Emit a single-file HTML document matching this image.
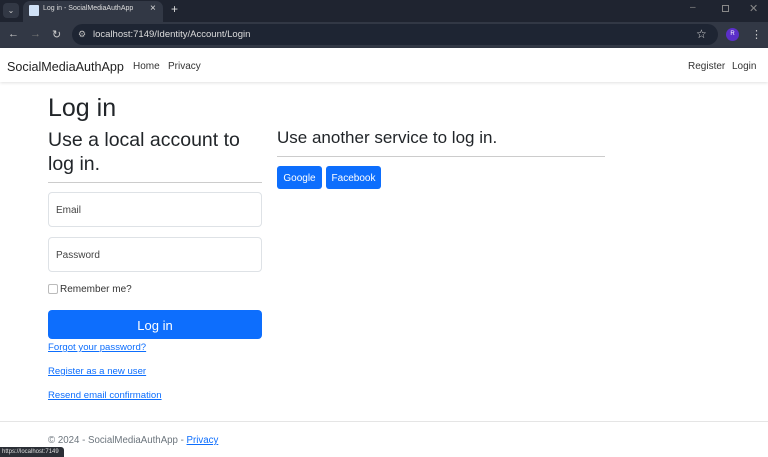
<!DOCTYPE html>
<html><head><meta charset="utf-8"><style>
*{box-sizing:border-box;margin:0;padding:0}
body{width:768px;height:457px;overflow:hidden;background:#fff;font-family:"Liberation Sans",sans-serif;position:relative;color:#212529}
.abs{position:absolute;white-space:nowrap}
.tabbar{position:absolute;left:0;top:0;width:768px;height:22px;background:#1f2430}
.tab{position:absolute;left:23px;top:1px;width:140px;height:21px;background:#323845;border-radius:7px 7px 0 0}
.toolbar{position:absolute;left:0;top:22px;width:768px;height:26px;background:#323845}
.url{position:absolute;left:72px;top:24px;width:646px;height:21px;background:#1e2533;border-radius:11px}
.nav{position:absolute;left:0;top:48px;width:768px;height:34px;background:#fff;box-shadow:0 1px 3px rgba(0,0,0,.12)}
a{color:#0d6efd;text-decoration:underline}
.inp{position:absolute;left:48px;width:214px;height:35px;border:1px solid #dee2e6;border-radius:4px;font-size:10px;padding:0 7px;line-height:35px;color:#444}
.btn{position:absolute;background:#0d6efd;color:#fff;border-radius:3px;text-align:center}
</style></head><body>
<div class="tabbar"></div>
<div class="abs" style="left:3px;top:3px;width:16px;height:15px;background:#323845;border-radius:4px;color:#ccc;font-size:8px;text-align:center;line-height:15px">⌄</div>
<div class="tab"></div>
<div class="abs" style="left:29px;top:5px;width:10px;height:11px;background:#cfe0f5;border-radius:1px"></div>
<div class="abs" style="left:43px;top:5px;font-size:7px;color:#ddd">Log in - SocialMediaAuthApp</div>
<div class="abs" style="left:150px;top:3px;font-size:10px;color:#ddd">×</div>
<div class="abs" style="left:171px;top:2px;font-size:12px;color:#ddd">+</div>
<div class="abs" style="left:690px;top:2px;font-size:10px;color:#888">–</div>
<div class="abs" style="left:722px;top:5px;width:7px;height:7px;border:1px solid #888"></div>
<div class="abs" style="left:749px;top:2px;font-size:11px;color:#888">✕</div>
<div class="toolbar"></div>
<div class="abs" style="left:8px;top:28px;font-size:11px;color:#ccc">←</div>
<div class="abs" style="left:30px;top:28px;font-size:11px;color:#777">→</div>
<div class="abs" style="left:52px;top:28px;font-size:11px;color:#ccc">↻</div>
<div class="url"></div>
<div class="abs" style="left:78px;top:29px;font-size:9px;color:#bbb">⚙</div>
<div class="abs" style="left:93px;top:29px;font-size:9.5px;color:#ddd">localhost:7149/Identity/Account/Login</div>
<div class="abs" style="left:696px;top:27px;font-size:12px;color:#ddd">☆</div>
<div class="abs" style="left:726px;top:28px;width:13px;height:13px;border-radius:50%;background:#5b2fc9;color:#fff;font-size:6px;text-align:center;line-height:13px">R</div>
<div class="abs" style="left:751px;top:28px;font-size:11px;color:#ccc">⋮</div>
<div class="nav"></div>
<div class="abs" style="left:7px;top:60px;font-size:12.6px;color:#222">SocialMediaAuthApp</div>
<div class="abs" style="left:133px;top:61px;font-size:10px;color:#333">Home</div>
<div class="abs" style="left:168px;top:61px;font-size:10px;color:#333">Privacy</div>
<div class="abs" style="left:688px;top:61px;font-size:10px;color:#333">Register</div>
<div class="abs" style="left:732px;top:61px;font-size:10px;color:#333">Login</div>
<div class="abs" style="left:48px;top:94px;font-size:25px">Log in</div>
<div class="abs" style="left:48px;top:128px;font-size:19.5px;line-height:24px;white-space:normal;width:220px">Use a local account to log in.</div>
<div class="abs" style="left:48px;top:182px;width:214px;height:1px;background:#ccc"></div>
<div class="inp" style="top:192px">Email</div>
<div class="inp" style="top:237px">Password</div>
<div class="abs" style="left:48px;top:284px;width:10px;height:10px;border:1px solid #bbb;border-radius:2px"></div>
<div class="abs" style="left:60px;top:284px;font-size:10px;color:#333">Remember me?</div>
<div class="btn" style="left:48px;top:310px;width:214px;height:29px;font-size:13px;line-height:31px;border-radius:4px">Log in</div>
<div class="abs" style="left:48px;top:342px;font-size:9.6px"><a>Forgot your password?</a></div>
<div class="abs" style="left:48px;top:366px;font-size:9.6px"><a>Register as a new user</a></div>
<div class="abs" style="left:48px;top:390px;font-size:9.6px"><a>Resend email confirmation</a></div>
<div class="abs" style="left:277px;top:128px;font-size:17px">Use another service to log in.</div>
<div class="abs" style="left:277px;top:156px;width:328px;height:1px;background:#ccc"></div>
<div class="btn" style="left:277px;top:166px;width:45px;height:23px;font-size:10px;line-height:25px">Google</div>
<div class="btn" style="left:326px;top:166px;width:55px;height:23px;font-size:10px;line-height:25px">Facebook</div>
<div class="abs" style="left:0;top:421px;width:768px;height:1px;background:#e5e5e5"></div>
<div class="abs" style="left:48px;top:435px;font-size:9.7px;color:#6c757d">© 2024 - SocialMediaAuthApp - <a>Privacy</a></div>
<div class="abs" style="left:0;top:447px;width:64px;height:10px;background:#2b2f36;color:#ddd;font-size:6px;line-height:10px;padding-left:2px;border-radius:0 3px 0 0">https://localhost:7149</div>
</body></html>
